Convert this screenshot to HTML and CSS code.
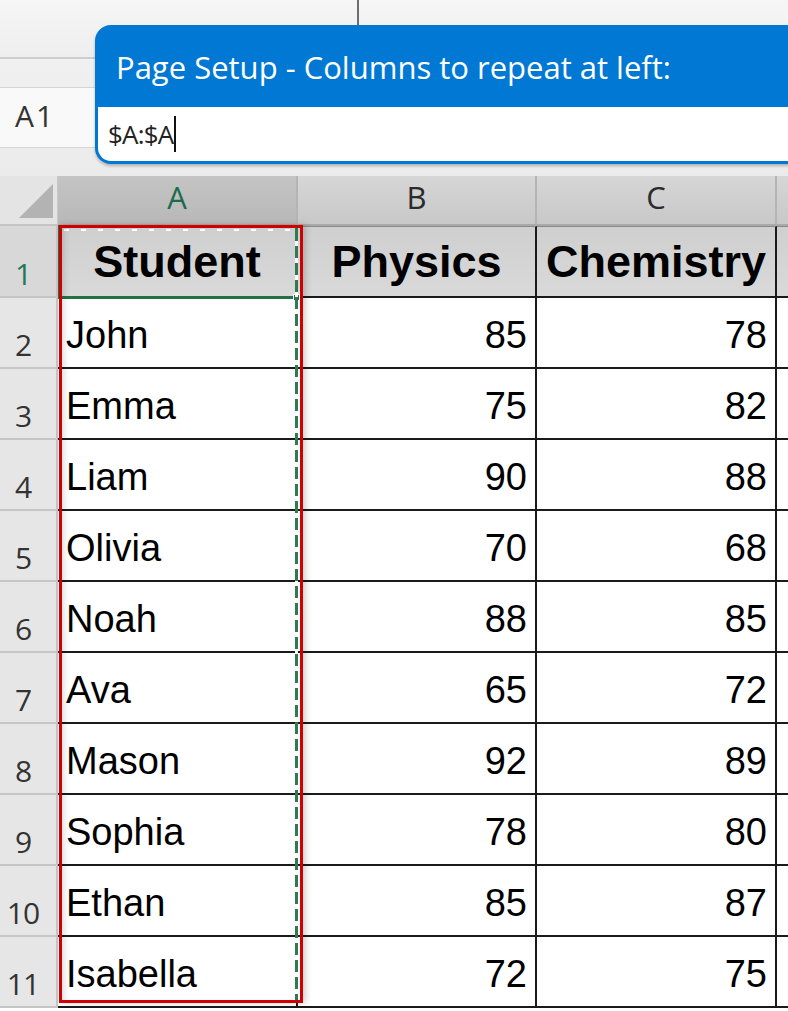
FILE: index.html
```html
<!DOCTYPE html>
<html>
<head>
<meta charset="utf-8">
<link rel="stylesheet" href="styles.css">
</head>
<body>
<div class="page">
  <div class="top">
    <div class="ribbon"><div class="ribbon-sep"></div></div>
    <div class="formula-row">
      <div class="namebox">A1</div>
    </div>
    <div class="dialog">
      <div class="dialog-title">Page Setup - Columns to repeat at left:</div>
      <div class="dialog-input"><span class="val">$A:$A</span><span class="caret"></span></div>
    </div>
  </div>
  <div class="sheet">
    <div class="corner"><div class="tri"></div></div>
    <div class="colhead sel">A</div>
    <div class="colhead">B</div>
    <div class="colhead">C</div>
    <div class="colhead last"></div>

    <div class="rowhead sel">1</div>
    <div class="cell hdr">Student</div>
    <div class="cell hdr">Physics</div>
    <div class="cell hdr">Chemistry</div>
    <div class="cell hdr edge"></div>

    <div class="rowhead">2</div><div class="cell name">John</div><div class="cell num">85</div><div class="cell num">78</div><div class="cell edge"></div>
    <div class="rowhead">3</div><div class="cell name">Emma</div><div class="cell num">75</div><div class="cell num">82</div><div class="cell edge"></div>
    <div class="rowhead">4</div><div class="cell name">Liam</div><div class="cell num">90</div><div class="cell num">88</div><div class="cell edge"></div>
    <div class="rowhead">5</div><div class="cell name">Olivia</div><div class="cell num">70</div><div class="cell num">68</div><div class="cell edge"></div>
    <div class="rowhead">6</div><div class="cell name">Noah</div><div class="cell num">88</div><div class="cell num">85</div><div class="cell edge"></div>
    <div class="rowhead">7</div><div class="cell name">Ava</div><div class="cell num">65</div><div class="cell num">72</div><div class="cell edge"></div>
    <div class="rowhead">8</div><div class="cell name">Mason</div><div class="cell num">92</div><div class="cell num">89</div><div class="cell edge"></div>
    <div class="rowhead">9</div><div class="cell name">Sophia</div><div class="cell num">78</div><div class="cell num">80</div><div class="cell edge"></div>
    <div class="rowhead">10</div><div class="cell name">Ethan</div><div class="cell num">85</div><div class="cell num">87</div><div class="cell edge"></div>
    <div class="rowhead">11</div><div class="cell name">Isabella</div><div class="cell num">72</div><div class="cell num">75</div><div class="cell edge"></div>

    <div class="a1-sel"><div class="handle"></div></div>
    <div class="marquee-top"></div>
    <div class="marquee-right"></div>
    <div class="redbox"></div>
  </div>
</div>
</body>
</html>
```

FILE: styles.css
```css
* { box-sizing: border-box; }
html, body { margin: 0; padding: 0; }
body {
  width: 788px;
  height: 1011px;
  overflow: hidden;
  background: #ffffff;
  font-family: "Liberation Sans", Arial, sans-serif;
}
.page { width: 788px; height: 1011px; display: flex; flex-direction: column; }

/* ---------- top area ---------- */
.top {
  position: relative;
  height: 176px;
  flex: none;
  background: linear-gradient(#f3f3f3, #ebebeb);
}
.ribbon {
  height: 59px;
  border-bottom: 2px solid #cdcdcd;
  position: relative;
  background: linear-gradient(#f6f6f6, #eeeeee);
}
.ribbon-sep {
  position: absolute;
  left: 357px;
  top: 0;
  width: 2px;
  height: 26px;
  background: #6e6e6e;
}
.formula-row {
  padding-top: 28px;
}
.namebox {
  width: 110px;
  height: 61px;
  background: #f9f9f9;
  border: 1px solid #d6d6d6;
  border-left: none;
  font-family: "Open Sans", "Noto Sans", sans-serif;
  font-size: 30px;
  letter-spacing: 2px;
  color: #333;
  padding: 7px 0 0 15px;
}
.dialog {
  position: absolute;
  left: 95px;
  top: 25px;
  width: 720px;
  height: 139px;
  border-radius: 16px 0 0 16px;
  background: #0078d4;
  box-shadow: 0 2px 3px rgba(0,0,0,0.25);
  display: flex;
  flex-direction: column;
  font-family: "Open Sans", "Noto Sans", sans-serif;
}
.dialog-title {
  height: 82px;
  color: #ffffff;
  font-size: 31px;
  padding: 21px 0 0 21px;
  white-space: nowrap;
}
.dialog-input {
  flex: 1;
  margin: 0 0 3px 3px;
  background: #ffffff;
  border-radius: 0 0 0 13px;
  display: flex;
  align-items: center;
  padding: 0 0 0 10px;
  font-size: 26px;
  color: #222;
}
.val { letter-spacing: -0.8px; }
.caret {
  display: inline-block;
  width: 2px;
  height: 36px;
  background: #111;
  margin-left: 1px;
}

/* ---------- sheet ---------- */
.sheet {
  position: relative;
  flex: 1;
  display: grid;
  grid-template-columns: 58px 240px 239px 240px 1fr;
  grid-template-rows: 50px 72px repeat(10, 71px);
}
.corner {
  background: #e4e4e4;
  border-right: 1px solid #c8c8c8;
  border-bottom: 2px solid #c4c4c4;
  position: relative;
}
.tri {
  position: absolute;
  right: 4px;
  bottom: 6px;
  width: 0;
  height: 0;
  border-left: 34px solid transparent;
  border-bottom: 34px solid #b3b3b3;
}
.colhead {
  background: linear-gradient(#d6d6d6, #c8c8c8);
  border-right: 2px solid #b4b4b4;
  border-bottom: 2px solid #a9a9a9;
  font-family: "Open Sans", "Noto Sans", sans-serif;
  font-size: 31px;
  color: #2b2b2b;
  text-align: center;
  padding-top: 0;
}
.colhead.sel {
  background: linear-gradient(#c4c4c4, #b8b8b8);
  color: #1c6b4f;
}
.colhead.last { border-right: none; }

.rowhead {
  background: #e6e6e6;
  border-right: 2px solid #c6c6c6;
  border-bottom: 2px solid #c6c6c6;
  font-family: "Open Sans", "Noto Sans", sans-serif;
  font-size: 30px;
  color: #333;
  display: flex;
  align-items: flex-end;
  justify-content: center;
  padding: 0 10px 2px 0;
  letter-spacing: -1px;
}
.rowhead.sel {
  background: #d8d8d8;
  color: #1d7a55;
}

.cell {
  border-right: 2px solid #1a1a1a;
  border-bottom: 2px solid #1a1a1a;
  background: #ffffff;
  color: #000;
  font-size: 38px;
  display: flex;
  align-items: flex-end;
  padding-bottom: 10px;
  white-space: nowrap;
  overflow: hidden;
}
.cell.hdr {
  background: linear-gradient(#cfcfcf, #d9d9d9);
  font-weight: bold;
  font-size: 45px;
  justify-content: center;
  padding-bottom: 8px;
  border-top: 1px solid #8a8a8a;
}
.cell.name { padding-left: 8px; }
.cell.num { justify-content: flex-end; padding-right: 8px; }
.cell.edge { border-right: none; }

/* ---------- overlays ---------- */
.a1-sel {
  position: absolute;
  left: 58px;
  top: 49px;
  width: 240px;
  height: 74px;
  border: 3px solid #217346;
}
.handle {
  position: absolute;
  right: -5px;
  bottom: -5px;
  width: 7px;
  height: 7px;
  background: #217346;
  border: 1px solid #fff;
}
.marquee-top {
  position: absolute;
  left: 64px;
  top: 53px;
  width: 232px;
  height: 2px;
  background: repeating-linear-gradient(to right, rgba(255,255,255,0.95) 0 5px, transparent 5px 17px);
}
.marquee-right {
  position: absolute;
  left: 295px;
  top: 53px;
  width: 3px;
  height: 773px;
  background: repeating-linear-gradient(to bottom, #2f7a4f 0 12px, #ffffff 12px 17px);
}
.redbox {
  position: absolute;
  left: 59px;
  top: 49px;
  width: 244px;
  height: 778px;
  border: 3px solid #d00000;
  box-shadow: 3px 0 6px rgba(0,0,0,0.18), inset 6px 0 6px -4px rgba(0,0,0,0.15);
}
```
